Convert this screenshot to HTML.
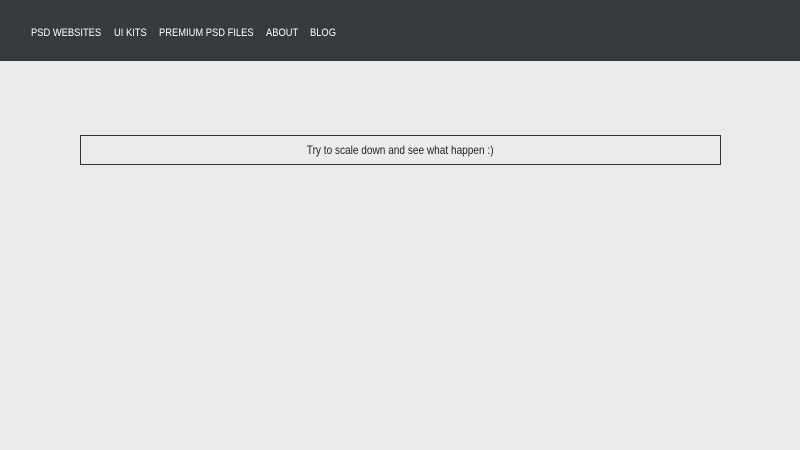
<!DOCTYPE html>
<html><head><meta charset="utf-8"><style>
html,body{margin:0;padding:0;width:800px;height:450px;background:#ebebeb;font-family:"Liberation Sans",sans-serif;overflow:hidden}
.nav{height:61px;background:#373b3e;position:relative}
.nav span{position:absolute;top:27px;color:#fff;font-size:11px;line-height:12px;white-space:nowrap;transform:scaleX(0.85);transform-origin:0 0}
.box{position:absolute;left:80px;top:135px;width:639px;height:28px;border:1px solid #333;text-align:center;line-height:29px;font-size:12px;color:#222}
.box span{display:inline-block;transform:scaleX(0.84);white-space:nowrap}
</style></head><body>
<div class="nav">
<span style="left:31px">PSD WEBSITES</span>
<span style="left:114px">UI KITS</span>
<span style="left:159px">PREMIUM PSD FILES</span>
<span style="left:266px">ABOUT</span>
<span style="left:310px">BLOG</span>
</div>
<div class="box"><span>Try to scale down and see what happen :)</span></div>
</body></html>
